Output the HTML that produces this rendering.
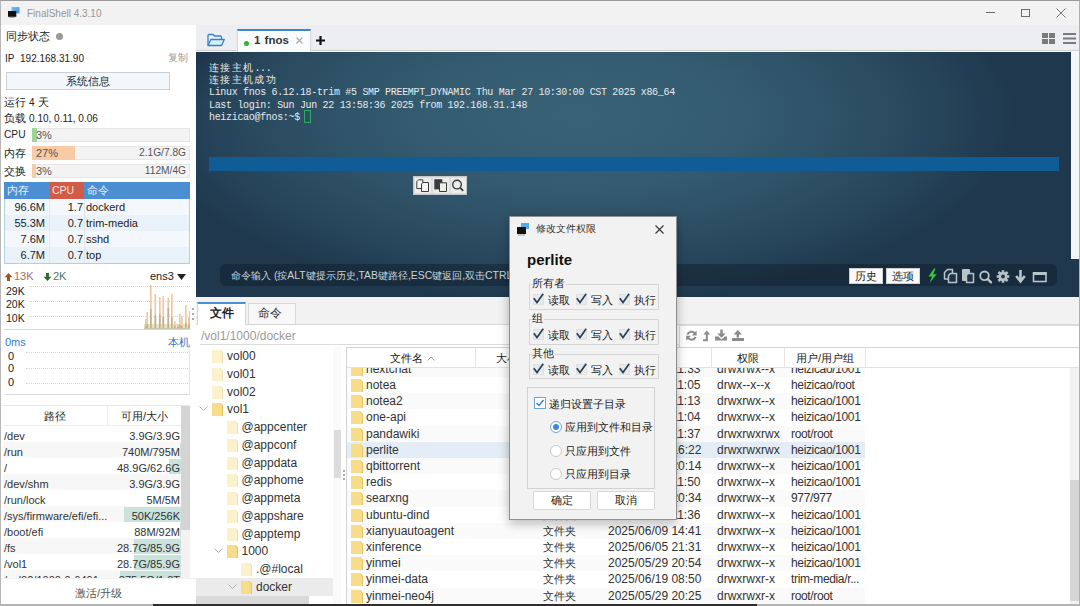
<!DOCTYPE html>
<html><head><meta charset="utf-8">
<style>
*{margin:0;padding:0;box-sizing:border-box}
html,body{width:1080px;height:606px;overflow:hidden;background:#f2f2f2;font-family:"Liberation Sans",sans-serif;color:#222}
.a{position:absolute;white-space:nowrap}
.t{font-size:11px;line-height:14px;height:14px}
</style></head><body>
<div class="a" style="left:0;top:0;width:1080px;height:606px;background:#f2f2f2;border-top:1px solid #9a9a9a;border-left:1px solid #b8b8b8;border-right:1px solid #b0b0b0"></div>

<!-- TITLE BAR -->
<svg class="a" style="left:7px;top:6px" width="15" height="15" viewBox="0 0 15 15">
 <defs><linearGradient id="gb" x1="0" y1="0" x2="1" y2="1"><stop offset="0" stop-color="#7cc0f0"/><stop offset="1" stop-color="#3f8fd8"/></linearGradient></defs>
 <rect x="4.5" y="1" width="8" height="6.3" fill="url(#gb)"/>
 <rect x="1" y="5" width="8.3" height="5.8" fill="#111"/>
 <rect x="2.5" y="11" width="5" height="1" fill="#aaa"/>
</svg>
<div class="a" style="left:27px;top:7px;font-size:10px;line-height:14px;color:#959595">FinalShell 4.3.10</div>
<div class="a" style="left:986px;top:12px;width:9px;height:1px;background:#6a6a6a"></div>
<div class="a" style="left:1021px;top:8.5px;width:9px;height:8.5px;border:1px solid #6e6e6e"></div>
<svg class="a" style="left:1056px;top:8px" width="10" height="10" viewBox="0 0 10 10"><path d="M0.5 0.5L9.5 9.5M9.5 0.5L0.5 9.5" stroke="#777" stroke-width="1"/></svg>

<!-- SIDEBAR -->
<div class="a" style="left:1px;top:25px;width:195px;height:581px;background:#fff"></div>
<div class="a t" style="left:6px;top:29px">同步状态</div>
<div class="a" style="left:56px;top:33px;width:7px;height:7px;border-radius:50%;background:#9a9a9a"></div>
<div class="a t" style="left:5px;top:52px;font-size:10px">IP&nbsp; 192.168.31.90</div>
<div class="a t" style="left:168px;top:51px;color:#9a9a9a;font-size:10px">复制</div>
<div class="a t" style="left:6px;top:72px;width:164px;height:18px;line-height:16px;text-align:center;background:#f1f7fa;border:1px solid #c9d1d6">系统信息</div>
<div class="a t" style="left:4px;top:95px">运行 <span style="font-size:10px">4</span> 天</div>
<div class="a t" style="left:4px;top:111px">负载 <span style="font-size:10px">0.10, 0.11, 0.06</span></div>

<div class="a t" style="left:4px;top:128px;font-size:10.2px">CPU</div>
<div class="a" style="left:32px;top:128px;width:158px;height:14px;background:#f3f3f3;border:1px solid #e6e6e6"></div>
<div class="a" style="left:32px;top:128px;width:5px;height:14px;background:#9fd49b"></div>
<div class="a t" style="left:36px;top:128px;color:#555">3%</div>

<div class="a t" style="left:4px;top:146px">内存</div>
<div class="a" style="left:32px;top:146px;width:158px;height:14px;background:#f3f3f3;border:1px solid #e6e6e6"></div>
<div class="a" style="left:32px;top:146px;width:43px;height:14px;background:#f6cba6"></div>
<div class="a t" style="left:36px;top:146px;color:#555">27%</div>
<div class="a t" style="left:120px;top:146px;width:66px;text-align:right;color:#555;font-size:10.2px">2.1G/7.8G</div>

<div class="a t" style="left:4px;top:164px">交换</div>
<div class="a" style="left:32px;top:164px;width:158px;height:14px;background:#f3f3f3;border:1px solid #e6e6e6"></div>
<div class="a" style="left:32px;top:164px;width:4px;height:14px;background:#f6cba6"></div>
<div class="a t" style="left:36px;top:164px;color:#555">3%</div>
<div class="a t" style="left:120px;top:164px;width:66px;text-align:right;color:#555;font-size:10.2px">112M/4G</div>

<!-- process table -->
<div class="a" style="left:4px;top:182px;width:186px;height:82px;background:#eaf2f9;border:1px solid #b9cde0"></div>
<div class="a" style="left:4px;top:182px;width:186px;height:17px;background:#4b8fd2"></div>
<div class="a" style="left:50px;top:182px;width:34px;height:17px;background:#d05b47"></div>
<div class="a t" style="left:7px;top:183px;color:#e4eefa">内存</div>
<div class="a t" style="left:52px;top:183px;color:#fde0d8;font-size:10.5px">CPU</div>
<div class="a t" style="left:87px;top:183px;color:#e4eefa">命令</div>
<div class="a" style="left:5px;top:199px;width:184px;height:16px;background:#f4f8fc"></div>
<div class="a" style="left:5px;top:231px;width:184px;height:16px;background:#f4f8fc"></div>
<div class="a" style="left:49px;top:199px;width:1px;height:64px;background:#ece6e2"></div>
<div class="a" style="left:84px;top:199px;width:1px;height:64px;background:#dde6ee"></div>
<div class="a t" style="left:5px;top:200px;width:40px;text-align:right">96.6M</div>
<div class="a t" style="left:50px;top:200px;width:33px;text-align:right">1.7</div>
<div class="a t" style="left:86px;top:200px">dockerd</div>
<div class="a t" style="left:5px;top:216px;width:40px;text-align:right">55.3M</div>
<div class="a t" style="left:50px;top:216px;width:33px;text-align:right">0.7</div>
<div class="a t" style="left:86px;top:216px">trim-media</div>
<div class="a t" style="left:5px;top:232px;width:40px;text-align:right">7.6M</div>
<div class="a t" style="left:50px;top:232px;width:33px;text-align:right">0.7</div>
<div class="a t" style="left:86px;top:232px">sshd</div>
<div class="a t" style="left:5px;top:248px;width:40px;text-align:right">6.7M</div>
<div class="a t" style="left:50px;top:248px;width:33px;text-align:right">0.7</div>
<div class="a t" style="left:86px;top:248px">top</div>

<!-- network -->
<svg class="a" style="left:4px;top:273px" width="9" height="8" viewBox="0 0 9 8"><path d="M4.5 0L0.5 4.2H3V8H6V4.2H8.5Z" fill="#a4541c"/></svg>
<div class="a t" style="left:14px;top:269px;color:#a8705c">13K</div>
<svg class="a" style="left:43px;top:273px" width="9" height="8" viewBox="0 0 9 8"><path d="M4.5 8L0.5 3.8H3V0H6V3.8H8.5Z" fill="#2f6a2a"/></svg>
<div class="a t" style="left:53px;top:269px;color:#4c7670">2K</div>
<div class="a t" style="left:150px;top:269px">ens3</div>
<svg class="a" style="left:177px;top:274px" width="9" height="6" viewBox="0 0 9 6"><path d="M0 0H9L4.5 6Z" fill="#222"/></svg>
<div class="a" style="left:4px;top:329px;width:186px;height:1px;background:#d8d8d8"></div>
<div class="a" style="left:30px;top:286px;width:160px;border-top:1px dotted #d6d6d6"></div>
<div class="a" style="left:30px;top:301px;width:160px;border-top:1px dotted #d6d6d6"></div>
<div class="a" style="left:30px;top:316px;width:160px;border-top:1px dotted #d6d6d6"></div>
<div class="a t" style="left:6px;top:284px;font-size:10.5px">29K</div>
<div class="a t" style="left:6px;top:297px;font-size:10.5px">20K</div>
<div class="a t" style="left:6px;top:311px;font-size:10.5px">10K</div>
<svg class="a" style="left:144px;top:285px" width="46" height="45" viewBox="0 0 46 45">
<rect x="0" y="39" width="46" height="5" fill="#e9e2c8"/>
<rect x="1" y="34" width="1.6" height="10" fill="#f4c4a0"/>
<rect x="1" y="41" width="1.6" height="3" fill="#b9b48e"/>
<rect x="2.5" y="27" width="1.6" height="17" fill="#f4c4a0"/>
<rect x="2.5" y="39" width="1.6" height="5" fill="#b9b48e"/>
<rect x="6" y="0" width="1.6" height="44" fill="#f4c4a0"/>
<rect x="6" y="24" width="1.6" height="20" fill="#b9b48e"/>
<rect x="10.5" y="9" width="1.6" height="35" fill="#f4c4a0"/>
<rect x="10.5" y="30" width="1.6" height="14" fill="#b9b48e"/>
<rect x="15" y="12" width="1.6" height="32" fill="#f4c4a0"/>
<rect x="15" y="29" width="1.6" height="15" fill="#b9b48e"/>
<rect x="18.5" y="11" width="1.6" height="33" fill="#f4c4a0"/>
<rect x="18.5" y="32" width="1.6" height="12" fill="#b9b48e"/>
<rect x="23.5" y="13" width="1.6" height="31" fill="#f4c4a0"/>
<rect x="23.5" y="23" width="1.6" height="21" fill="#b9b48e"/>
<rect x="27" y="9" width="1.6" height="35" fill="#f4c4a0"/>
<rect x="27" y="32" width="1.6" height="12" fill="#b9b48e"/>
<rect x="30" y="36" width="1.6" height="8" fill="#f4c4a0"/>
<rect x="30" y="41" width="1.6" height="3" fill="#b9b48e"/>
<rect x="33" y="39" width="1.6" height="5" fill="#f4c4a0"/>
<rect x="33" y="42" width="1.6" height="2" fill="#b9b48e"/>
<rect x="35" y="29" width="1.6" height="15" fill="#f4c4a0"/>
<rect x="35" y="40" width="1.6" height="4" fill="#b9b48e"/>
<rect x="37" y="32" width="1.6" height="12" fill="#f4c4a0"/>
<rect x="37" y="41" width="1.6" height="3" fill="#b9b48e"/>
<rect x="41" y="20" width="1.6" height="24" fill="#f4c4a0"/>
<rect x="41" y="38" width="1.6" height="6" fill="#b9b48e"/>
<rect x="45" y="26" width="1.6" height="18" fill="#f4c4a0"/>
<rect x="45" y="39" width="1.6" height="5" fill="#b9b48e"/>
<rect x="44" y="32" width="1.6" height="12" fill="#f4c4a0"/>
<rect x="44" y="40" width="1.6" height="4" fill="#b9b48e"/>
<rect x="0" y="43" width="46" height="1" fill="#c9c6a6"/>
</svg>

<!-- latency -->
<div class="a t" style="left:5px;top:335px;color:#3a78c0">0ms</div>
<div class="a t" style="left:168px;top:335px;color:#3a78c0">本机</div>
<div class="a" style="left:5px;top:348px;width:185px;height:47px;border-right:1px solid #e6e6e6;border-bottom:1px solid #d8d8d8"></div>
<div class="a" style="left:26px;top:352px;width:162px;border-top:1px dotted #d6d6d6"></div>
<div class="a" style="left:26px;top:368px;width:162px;border-top:1px dotted #d6d6d6"></div>
<div class="a" style="left:26px;top:383px;width:162px;border-top:1px dotted #d6d6d6"></div>
<div class="a t" style="left:8px;top:349px">0</div>
<div class="a t" style="left:8px;top:361px">0</div>
<div class="a t" style="left:8px;top:375px">0</div>

<!-- disk table -->
<div class="a" style="left:2px;top:405px;width:188px;height:173px;background:#fff;border-top:1px solid #e8e8e8"></div>
<div class="a" style="left:3px;top:406px;width:178px;height:20px;background:#fff;border-bottom:1px solid #ececec"></div>
<div class="a" style="left:107px;top:406px;width:1px;height:20px;background:#ececec"></div>
<div class="a t" style="left:3px;top:409px;width:104px;text-align:center">路径</div>
<div class="a t" style="left:108px;top:409px;width:73px;text-align:center">可用/大小</div>
<div class="a" style="left:181px;top:406px;width:9px;height:172px;background:#f2f2f2"></div>
<div class="a" style="left:181px;top:406px;width:9px;height:124px;background:#d4d4d4"></div>
<div class="a" style="left:3px;top:426px;width:178px;height:16px;background:#fff;overflow:hidden">
<div class="a t" style="left:1px;top:2.5px;color:#333">/dev</div><div class="a t" style="left:80px;top:2.5px;width:97px;text-align:right;color:#333">3.9G/3.9G</div></div>
<div class="a" style="left:3px;top:442px;width:178px;height:16px;background:#f7f7f7;overflow:hidden">
<div class="a" style="left:177px;top:1px;width:1px;height:15px;background:#c9e2dc"></div>
<div class="a t" style="left:1px;top:2.5px;color:#333">/run</div><div class="a t" style="left:80px;top:2.5px;width:97px;text-align:right;color:#333">740M/795M</div></div>
<div class="a" style="left:3px;top:458px;width:178px;height:16px;background:#fff;overflow:hidden">
<div class="a" style="left:166px;top:1px;width:12px;height:15px;background:#c9e2dc"></div>
<div class="a t" style="left:1px;top:2.5px;color:#333">/</div><div class="a t" style="left:80px;top:2.5px;width:97px;text-align:right;color:#333">48.9G/62.6G</div></div>
<div class="a" style="left:3px;top:474px;width:178px;height:16px;background:#f7f7f7;overflow:hidden">
<div class="a t" style="left:1px;top:2.5px;color:#333">/dev/shm</div><div class="a t" style="left:80px;top:2.5px;width:97px;text-align:right;color:#333">3.9G/3.9G</div></div>
<div class="a" style="left:3px;top:490px;width:178px;height:16px;background:#fff;overflow:hidden">
<div class="a t" style="left:1px;top:2.5px;color:#333">/run/lock</div><div class="a t" style="left:80px;top:2.5px;width:97px;text-align:right;color:#333">5M/5M</div></div>
<div class="a" style="left:3px;top:506px;width:178px;height:16px;background:#f7f7f7;overflow:hidden">
<div class="a" style="left:121px;top:1px;width:57px;height:15px;background:#c9e2dc"></div>
<div class="a t" style="left:1px;top:2.5px;color:#333">/sys/firmware/efi/efi...</div><div class="a t" style="left:80px;top:2.5px;width:97px;text-align:right;color:#333">50K/256K</div></div>
<div class="a" style="left:3px;top:522px;width:178px;height:16px;background:#fff;overflow:hidden">
<div class="a" style="left:177px;top:1px;width:1px;height:15px;background:#c9e2dc"></div>
<div class="a t" style="left:1px;top:2.5px;color:#333">/boot/efi</div><div class="a t" style="left:80px;top:2.5px;width:97px;text-align:right;color:#333">88M/92M</div></div>
<div class="a" style="left:3px;top:538px;width:178px;height:16px;background:#f7f7f7;overflow:hidden">
<div class="a" style="left:131px;top:1px;width:47px;height:15px;background:#c9e2dc"></div>
<div class="a t" style="left:1px;top:2.5px;color:#333">/fs</div><div class="a t" style="left:80px;top:2.5px;width:97px;text-align:right;color:#333">28.7G/85.9G</div></div>
<div class="a" style="left:3px;top:554px;width:178px;height:16px;background:#fff;overflow:hidden">
<div class="a" style="left:131px;top:1px;width:47px;height:15px;background:#c9e2dc"></div>
<div class="a t" style="left:1px;top:2.5px;color:#333">/vol1</div><div class="a t" style="left:80px;top:2.5px;width:97px;text-align:right;color:#333">28.7G/85.9G</div></div>
<div class="a" style="left:3px;top:570px;width:178px;height:8px;background:#f7f7f7;overflow:hidden">
<div class="a" style="left:117px;top:1px;width:61px;height:15px;background:#c9e2dc"></div>
<div class="a t" style="left:1px;top:2.5px;color:#333">/vol02/1000-0-6491</div><div class="a t" style="left:80px;top:2.5px;width:97px;text-align:right;color:#333">375.5G/1.8T</div></div>
<div class="a" style="left:1px;top:578px;width:195px;height:28px;background:#fff;border-top:1px solid #f0f0f0"></div>
<div class="a t" style="left:1px;top:586px;width:195px;text-align:center;color:#555">激活/升级</div>
<!-- ===== TAB BAR ===== -->
<div class="a" style="left:196px;top:25px;width:883px;height:27px;background:#edeef1"></div>
<div class="a" style="left:196px;top:50px;width:883px;height:1px;background:#cfcfcf"></div>
<div class="a" style="left:196px;top:51px;width:883px;height:2px;background:#fafafa"></div>
<svg class="a" style="left:206px;top:33px" width="20" height="14" viewBox="0 0 20 14">
 <path d="M2 12.5V2.5Q2 1.5 3 1.5H7L8.5 3H14.5Q15.5 3 15.5 4V6.5" fill="#e6f4fc" stroke="#3b7fc4" stroke-width="1.3"/>
 <path d="M2 12.5L4.8 6.5H18.3L15.6 12.5Z" fill="#d6effc" stroke="#3b7fc4" stroke-width="1.3" stroke-linejoin="round"/>
</svg>
<div class="a" style="left:237px;top:29px;width:74px;height:23px;background:#fbfcfd;border:1px solid #d6d6d6;border-bottom:none;border-top:2px solid #4085c2"></div>
<div class="a" style="left:244px;top:41px;width:5px;height:5px;border-radius:50%;background:#2fb52f"></div>
<div class="a" style="left:254px;top:33px;font-size:11.5px;line-height:15px;font-weight:bold;color:#333;word-spacing:1px">1 fnos</div>
<svg class="a" style="left:296px;top:37px" width="7" height="7" viewBox="0 0 7 7"><path d="M0.5 0.5L6.5 6.5M6.5 0.5L0.5 6.5" stroke="#a8a8a8" stroke-width="1.1"/></svg>
<svg class="a" style="left:316px;top:36px" width="9" height="9" viewBox="0 0 9 9"><path d="M4.5 0V9M0 4.5H9" stroke="#111" stroke-width="2.2"/></svg>
<svg class="a" style="left:1042px;top:33px" width="14" height="11" viewBox="0 0 14 11"><rect x="0" y="0" width="6" height="5" fill="#7a7a7a"/><rect x="7" y="0" width="6" height="5" fill="#7a7a7a"/><rect x="0" y="6" width="6" height="5" fill="#7a7a7a"/><rect x="7" y="6" width="6" height="5" fill="#7a7a7a"/></svg>
<svg class="a" style="left:1063px;top:33px" width="13" height="11" viewBox="0 0 13 11"><rect x="0" y="0" width="13" height="2" fill="#7a7a7a"/><rect x="0" y="4.5" width="13" height="2" fill="#7a7a7a"/><rect x="0" y="9" width="13" height="2" fill="#7a7a7a"/></svg>

<!-- ===== TERMINAL ===== -->
<div class="a" style="left:196px;top:52px;width:883px;height:245px;background:radial-gradient(ellipse 70px 50px at 0px 0px,rgba(20,35,55,0.3),rgba(20,35,55,0) 100%),radial-gradient(ellipse 437px 187px at 383px 64px,#386175 0%,#375f73 20%,#335a6e 40%,#2e5166 60%,#28465b 80%,#1f384e 100%)"></div>
<div class="a" style="left:1071px;top:52px;width:8px;height:207px;background:#f4f6f8"></div>
<div class="a" style="left:209px;top:63px;font-family:'Liberation Mono',monospace;font-size:10px;line-height:12.2px;letter-spacing:-0.32px;color:#e6e9ec;white-space:pre"><span style="display:inline-block;width:11.36px;letter-spacing:0">连</span><span style="display:inline-block;width:11.36px;letter-spacing:0">接</span><span style="display:inline-block;width:11.36px;letter-spacing:0">主</span><span style="display:inline-block;width:11.36px;letter-spacing:0">机</span>...
<span style="display:inline-block;width:11.36px;letter-spacing:0">连</span><span style="display:inline-block;width:11.36px;letter-spacing:0">接</span><span style="display:inline-block;width:11.36px;letter-spacing:0">主</span><span style="display:inline-block;width:11.36px;letter-spacing:0">机</span><span style="display:inline-block;width:11.36px;letter-spacing:0">成</span><span style="display:inline-block;width:11.36px;letter-spacing:0">功</span>
Linux fnos 6.12.18-trim #5 SMP PREEMPT_DYNAMIC Thu Mar 27 10:30:00 CST 2025 x86_64
Last login: Sun Jun 22 13:58:36 2025 from 192.168.31.148
heizicao@fnos:~$ </div>
<div class="a" style="left:304px;top:110px;width:7px;height:13px;border:1px solid #2fa86a"></div>
<div class="a" style="left:209px;top:157px;width:850px;height:14px;background:#0f5c96"></div>
<!-- popup toolbar -->
<div class="a" style="left:413px;top:176px;width:54px;height:19px;background:#d9dedf;border:1px solid #c4cacc"></div>
<div class="a" style="left:415px;top:178px;width:16px;height:15px;background:#ececec"></div>
<div class="a" style="left:433px;top:178px;width:16px;height:15px;background:#ececec"></div>
<div class="a" style="left:451px;top:178px;width:15px;height:15px;background:#ececec"></div>
<svg class="a" style="left:413px;top:176px" width="54" height="19" viewBox="0 0 54 19">
 <path d="M5.5 3.8H9.8V12.5H3.8V5.5Z" fill="#f4f4f4" stroke="#3a3a3a" stroke-width="1"/>
 <path d="M10 6.5H15.5V15.5H8.5V8Z" fill="#f4f4f4" stroke="#3a3a3a" stroke-width="1"/>
 <rect x="21.3" y="3.2" width="8" height="10.2" fill="#3a3a3a"/>
 <path d="M27.5 6.8H33.5V15.5H26.5V7.8Z" fill="#eef0ea" stroke="#3a3a3a" stroke-width="1"/>
 <circle cx="44" cy="8.6" r="4.3" fill="none" stroke="#3a3a3a" stroke-width="1.4"/>
 <path d="M47 11.6L50.2 14.8" stroke="#3a3a3a" stroke-width="1.8"/>
</svg>

<!-- command bar -->
<div class="a" style="left:220px;top:264px;width:837px;height:22px;border-radius:6px;background:rgba(15,28,40,0.45)"></div>
<div class="a" style="left:231px;top:269px;font-size:10.4px;line-height:14px;color:#c9d2da">命令输入 (按ALT键提示历史,TAB键路径,ESC键返回,双击CTRL切换)</div>
<div class="a" style="left:849px;top:268px;width:34px;height:16px;background:#fafafa;border:1px solid #cfcfcf;font-size:11px;line-height:14px;text-align:center;color:#222">历史</div>
<div class="a" style="left:886px;top:268px;width:34px;height:16px;background:#fafafa;border:1px solid #cfcfcf;font-size:11px;line-height:14px;text-align:center;color:#222">选项</div>
<svg class="a" style="left:925px;top:266px" width="125" height="20" viewBox="0 0 125 20">
 <path d="M9 2.5L3.5 10.5H7L4.5 17L11.8 8.2H8.2L10.5 2.5Z" fill="#39c43a"/>
 <path d="M22.5 3.5H27.5V13H19.5V6.5Z" fill="#1d3346" stroke="#b9c3ca" stroke-width="1.5" stroke-linejoin="round"/>
 <path d="M25.5 7.5H31.5V16.5H23.5V9.5Z" fill="#1d3346" stroke="#b9c3ca" stroke-width="1.5" stroke-linejoin="round"/>
 <rect x="37" y="3" width="8" height="12" rx="1" fill="#b9c3ca"/>
 <path d="M43 7.5H48.5V16.5H41.5V9Z" fill="#1d3346" stroke="#b9c3ca" stroke-width="1.5" stroke-linejoin="round"/>
 <circle cx="59.5" cy="9.8" r="4.3" fill="none" stroke="#b9c3ca" stroke-width="1.8"/>
 <path d="M62.8 13.1L66 16.3" stroke="#b9c3ca" stroke-width="2.4" stroke-linecap="round"/>
 <g transform="translate(78,10.5)"><circle r="4.6" fill="#b9c3ca"/><path d="M0 -6.3V6.3M-6.3 0H6.3M-4.5 -4.5L4.5 4.5M4.5 -4.5L-4.5 4.5" stroke="#b9c3ca" stroke-width="2.6"/><circle r="1.9" fill="#1d3346"/></g>
 <path d="M95.5 4V14.5M91.2 10L95.5 15.5L99.8 10" fill="none" stroke="#b9c3ca" stroke-width="2.6" stroke-linejoin="miter"/>
 <rect x="108.5" y="6.8" width="12.5" height="8.7" fill="none" stroke="#b9c3ca" stroke-width="1.6"/>
 <rect x="108" y="6" width="13.5" height="3" fill="#b9c3ca"/>
</svg>

<!-- ===== FILE PANEL ===== -->
<div class="a" style="left:196px;top:297px;width:883px;height:28px;background:#f2f2f2;border-bottom:1px solid #d8d8d8"></div>
<div class="a" style="left:197px;top:302px;width:49px;height:23px;background:#fff;border:1px solid #d6d6d6;border-bottom:none;border-top:2px solid #4a90d9"></div>
<div class="a" style="left:210px;top:306px;font-size:12px;line-height:15px;font-weight:bold;color:#222">文件</div>
<div class="a" style="left:248px;top:303px;width:48px;height:21px;background:#f7f7f7;border:1px solid #d8d8d8;border-bottom:none"></div>
<div class="a" style="left:258px;top:306px;font-size:12px;line-height:15px;color:#333">命令</div>
<div class="a" style="left:192px;top:308px;width:2px;height:2px;background:#aaa"></div>
<div class="a" style="left:192px;top:313px;width:2px;height:2px;background:#aaa"></div>
<div class="a" style="left:192px;top:318px;width:2px;height:2px;background:#aaa"></div>
<div class="a" style="left:196px;top:325px;width:883px;height:281px;background:#fff"></div>
<div class="a" style="left:201px;top:329px;font-size:12px;line-height:15px;color:#9a9a9a">/vol1/1000/docker</div>
<div class="a" style="left:200px;top:344px;width:479px;height:1px;background:#dcdcdc"></div>
<div class="a" style="left:679px;top:325px;width:400px;height:1px;background:#dcdcdc"></div>
<div class="a" style="left:679px;top:325px;width:1px;height:22px;background:#e0e0e0"></div>
<svg class="a" style="left:685px;top:329px" width="62" height="14" viewBox="0 0 62 14">
 <path d="M2.4 5.6A4.4 4.4 0 0 1 9.8 4.2" fill="none" stroke="#8a8a8a" stroke-width="2"/>
 <path d="M11.6 1.6V6.6H6.8Z" fill="#8a8a8a"/>
 <path d="M10.6 7.8A4.4 4.4 0 0 1 3.2 9.2" fill="none" stroke="#8a8a8a" stroke-width="2"/>
 <path d="M1.2 11.8V6.8H6Z" fill="#8a8a8a"/>
 <path d="M21.8 1.5L25.2 5.6H18.4Z" fill="#8a8a8a"/>
 <path d="M21.8 5V11.2H18" fill="none" stroke="#8a8a8a" stroke-width="2"/>
 <path d="M35.3 0.6H37.7V4.6H40.8L36.5 8.8L32.2 4.6H35.3Z" fill="#8a8a8a"/>
 <path d="M30 7.6H33.2L36.5 10.6L39.8 7.6H42V11.6H30Z" fill="#8a8a8a"/>
 <path d="M52.8 1L57 5.6H54V8.6H51.6V5.6H48.6Z" fill="#8a8a8a"/>
 <rect x="47" y="9" width="12" height="3" fill="#8a8a8a"/>
</svg>
<div class="a" style="left:196px;top:578px;width:137px;height:18px;background:#ebebeb"></div>
<div class="a" style="left:196px;top:596px;width:113px;height:8px;background:#d9d9d9"></div>
<div class="a" style="left:333px;top:347px;width:8px;height:257px;background:#fafafa"></div>
<div class="a" style="left:334px;top:430px;width:7px;height:48px;background:#dcdcdc"></div>
<div class="a" style="left:343px;top:470px;width:2px;height:2px;background:#aaa"></div>
<div class="a" style="left:343px;top:474px;width:2px;height:2px;background:#aaa"></div>
<div class="a" style="left:343px;top:478px;width:2px;height:2px;background:#aaa"></div>
<svg class="a" style="left:212.0px;top:350.0px" width="11" height="13" viewBox="0 0 11 13"><path d="M0 0H8.5L11 2.5V13H0Z" fill="#fbf1cc"/><path d="M8.5 0L11 2.5V13H10V3L8 0Z" fill="#efe2b0"/></svg>
<div class="a" style="left:227.0px;top:348.0px;font-size:12px;line-height:17px;color:#333">vol00</div>
<svg class="a" style="left:212.0px;top:367.75px" width="11" height="13" viewBox="0 0 11 13"><path d="M0 0H8.5L11 2.5V13H0Z" fill="#fbf1cc"/><path d="M8.5 0L11 2.5V13H10V3L8 0Z" fill="#efe2b0"/></svg>
<div class="a" style="left:227.0px;top:365.75px;font-size:12px;line-height:17px;color:#333">vol01</div>
<svg class="a" style="left:212.0px;top:385.5px" width="11" height="13" viewBox="0 0 11 13"><path d="M0 0H8.5L11 2.5V13H0Z" fill="#fbf1cc"/><path d="M8.5 0L11 2.5V13H10V3L8 0Z" fill="#efe2b0"/></svg>
<div class="a" style="left:227.0px;top:383.5px;font-size:12px;line-height:17px;color:#333">vol02</div>
<svg class="a" style="left:199.0px;top:406.25px" width="9" height="6" viewBox="0 0 9 6"><path d="M0.5 0.5L4.5 4.5L8.5 0.5" fill="none" stroke="#b0b0b0" stroke-width="1"/></svg>
<svg class="a" style="left:212.0px;top:403.25px" width="11" height="13" viewBox="0 0 11 13"><path d="M0 0H8.5L11 2.5V13H0Z" fill="#f7dc8a"/><path d="M8.5 0L11 2.5V13H10V3L8 0Z" fill="#e8c45a"/></svg>
<div class="a" style="left:227.0px;top:401.25px;font-size:12px;line-height:17px;color:#333">vol1</div>
<svg class="a" style="left:226.5px;top:421.0px" width="11" height="13" viewBox="0 0 11 13"><path d="M0 0H8.5L11 2.5V13H0Z" fill="#fbf1cc"/><path d="M8.5 0L11 2.5V13H10V3L8 0Z" fill="#efe2b0"/></svg>
<div class="a" style="left:241.5px;top:419.0px;font-size:12px;line-height:17px;color:#333">@appcenter</div>
<svg class="a" style="left:226.5px;top:438.75px" width="11" height="13" viewBox="0 0 11 13"><path d="M0 0H8.5L11 2.5V13H0Z" fill="#fbf1cc"/><path d="M8.5 0L11 2.5V13H10V3L8 0Z" fill="#efe2b0"/></svg>
<div class="a" style="left:241.5px;top:436.75px;font-size:12px;line-height:17px;color:#333">@appconf</div>
<svg class="a" style="left:226.5px;top:456.5px" width="11" height="13" viewBox="0 0 11 13"><path d="M0 0H8.5L11 2.5V13H0Z" fill="#fbf1cc"/><path d="M8.5 0L11 2.5V13H10V3L8 0Z" fill="#efe2b0"/></svg>
<div class="a" style="left:241.5px;top:454.5px;font-size:12px;line-height:17px;color:#333">@appdata</div>
<svg class="a" style="left:226.5px;top:474.25px" width="11" height="13" viewBox="0 0 11 13"><path d="M0 0H8.5L11 2.5V13H0Z" fill="#fbf1cc"/><path d="M8.5 0L11 2.5V13H10V3L8 0Z" fill="#efe2b0"/></svg>
<div class="a" style="left:241.5px;top:472.25px;font-size:12px;line-height:17px;color:#333">@apphome</div>
<svg class="a" style="left:226.5px;top:492.0px" width="11" height="13" viewBox="0 0 11 13"><path d="M0 0H8.5L11 2.5V13H0Z" fill="#fbf1cc"/><path d="M8.5 0L11 2.5V13H10V3L8 0Z" fill="#efe2b0"/></svg>
<div class="a" style="left:241.5px;top:490.0px;font-size:12px;line-height:17px;color:#333">@appmeta</div>
<svg class="a" style="left:226.5px;top:509.75px" width="11" height="13" viewBox="0 0 11 13"><path d="M0 0H8.5L11 2.5V13H0Z" fill="#fbf1cc"/><path d="M8.5 0L11 2.5V13H10V3L8 0Z" fill="#efe2b0"/></svg>
<div class="a" style="left:241.5px;top:507.75px;font-size:12px;line-height:17px;color:#333">@appshare</div>
<svg class="a" style="left:226.5px;top:527.5px" width="11" height="13" viewBox="0 0 11 13"><path d="M0 0H8.5L11 2.5V13H0Z" fill="#fbf1cc"/><path d="M8.5 0L11 2.5V13H10V3L8 0Z" fill="#efe2b0"/></svg>
<div class="a" style="left:241.5px;top:525.5px;font-size:12px;line-height:17px;color:#333">@apptemp</div>
<svg class="a" style="left:213.5px;top:548.25px" width="9" height="6" viewBox="0 0 9 6"><path d="M0.5 0.5L4.5 4.5L8.5 0.5" fill="none" stroke="#b0b0b0" stroke-width="1"/></svg>
<svg class="a" style="left:226.5px;top:545.25px" width="11" height="13" viewBox="0 0 11 13"><path d="M0 0H8.5L11 2.5V13H0Z" fill="#f7dc8a"/><path d="M8.5 0L11 2.5V13H10V3L8 0Z" fill="#e8c45a"/></svg>
<div class="a" style="left:241.5px;top:543.25px;font-size:12px;line-height:17px;color:#333">1000</div>
<svg class="a" style="left:241.0px;top:563.0px" width="11" height="13" viewBox="0 0 11 13"><path d="M0 0H8.5L11 2.5V13H0Z" fill="#fbf1cc"/><path d="M8.5 0L11 2.5V13H10V3L8 0Z" fill="#efe2b0"/></svg>
<div class="a" style="left:256.0px;top:561.0px;font-size:12px;line-height:17px;color:#333">.@#local</div>
<svg class="a" style="left:228.0px;top:583.75px" width="9" height="6" viewBox="0 0 9 6"><path d="M0.5 0.5L4.5 4.5L8.5 0.5" fill="none" stroke="#b0b0b0" stroke-width="1"/></svg>
<svg class="a" style="left:241.0px;top:580.75px" width="11" height="13" viewBox="0 0 11 13"><path d="M0 0H8.5L11 2.5V13H0Z" fill="#f7dc8a"/><path d="M8.5 0L11 2.5V13H10V3L8 0Z" fill="#e8c45a"/></svg>
<div class="a" style="left:256.0px;top:578.75px;font-size:12px;line-height:17px;color:#333">docker</div>
<div class="a" style="left:346px;top:347px;width:733px;height:257px;background:#fff;border-left:1px solid #d4d4d4;border-top:1px solid #d4d4d4;overflow:hidden">
<div class="a" style="left:0;top:12.8px;width:518px;height:16.2px;background:#fafafa"></div>
<svg class="a" style="left:4px;top:14.8px" width="12" height="13" viewBox="0 0 12 13"><path d="M0 0H9L12 3V13H0Z" fill="#f7dc8a"/><path d="M9 0L12 3V13H11V3.5L8.5 0Z" fill="#e8c45a"/></svg>
<div class="a" style="left:19px;top:13.8px;font-size:12px;line-height:15px;color:#333">nextchat</div>
<div class="a" style="left:196px;top:13.8px;font-size:11px;line-height:15px;color:#333">文件夹</div>
<div class="a" style="left:261px;top:13.8px;font-size:12px;line-height:15px;color:#333">2025/06/05 11:33</div>
<div class="a" style="left:370px;top:13.8px;font-size:12px;line-height:15px;color:#333">drwxrwx--x</div>
<div class="a" style="left:444px;top:13.8px;font-size:12px;line-height:15px;letter-spacing:-0.35px;color:#333">heizicao/1001</div>
<div class="a" style="left:0;top:29.0px;width:518px;height:16.2px;background:#fff"></div>
<svg class="a" style="left:4px;top:31.0px" width="12" height="13" viewBox="0 0 12 13"><path d="M0 0H9L12 3V13H0Z" fill="#f7dc8a"/><path d="M9 0L12 3V13H11V3.5L8.5 0Z" fill="#e8c45a"/></svg>
<div class="a" style="left:19px;top:30.0px;font-size:12px;line-height:15px;color:#333">notea</div>
<div class="a" style="left:196px;top:30.0px;font-size:11px;line-height:15px;color:#333">文件夹</div>
<div class="a" style="left:261px;top:30.0px;font-size:12px;line-height:15px;color:#333">2025/06/05 11:05</div>
<div class="a" style="left:370px;top:30.0px;font-size:12px;line-height:15px;color:#333">drwx--x--x</div>
<div class="a" style="left:444px;top:30.0px;font-size:12px;line-height:15px;letter-spacing:-0.35px;color:#333">heizicao/root</div>
<div class="a" style="left:0;top:45.2px;width:518px;height:16.2px;background:#fafafa"></div>
<svg class="a" style="left:4px;top:47.2px" width="12" height="13" viewBox="0 0 12 13"><path d="M0 0H9L12 3V13H0Z" fill="#f7dc8a"/><path d="M9 0L12 3V13H11V3.5L8.5 0Z" fill="#e8c45a"/></svg>
<div class="a" style="left:19px;top:46.2px;font-size:12px;line-height:15px;color:#333">notea2</div>
<div class="a" style="left:196px;top:46.2px;font-size:11px;line-height:15px;color:#333">文件夹</div>
<div class="a" style="left:261px;top:46.2px;font-size:12px;line-height:15px;color:#333">2025/06/05 11:13</div>
<div class="a" style="left:370px;top:46.2px;font-size:12px;line-height:15px;color:#333">drwxrwx--x</div>
<div class="a" style="left:444px;top:46.2px;font-size:12px;line-height:15px;letter-spacing:-0.35px;color:#333">heizicao/1001</div>
<div class="a" style="left:0;top:61.4px;width:518px;height:16.2px;background:#fff"></div>
<svg class="a" style="left:4px;top:63.4px" width="12" height="13" viewBox="0 0 12 13"><path d="M0 0H9L12 3V13H0Z" fill="#f7dc8a"/><path d="M9 0L12 3V13H11V3.5L8.5 0Z" fill="#e8c45a"/></svg>
<div class="a" style="left:19px;top:62.4px;font-size:12px;line-height:15px;color:#333">one-api</div>
<div class="a" style="left:196px;top:62.4px;font-size:11px;line-height:15px;color:#333">文件夹</div>
<div class="a" style="left:261px;top:62.4px;font-size:12px;line-height:15px;color:#333">2025/06/05 11:04</div>
<div class="a" style="left:370px;top:62.4px;font-size:12px;line-height:15px;color:#333">drwxrwx--x</div>
<div class="a" style="left:444px;top:62.4px;font-size:12px;line-height:15px;letter-spacing:-0.35px;color:#333">heizicao/1001</div>
<div class="a" style="left:0;top:77.6px;width:518px;height:16.2px;background:#fafafa"></div>
<svg class="a" style="left:4px;top:79.6px" width="12" height="13" viewBox="0 0 12 13"><path d="M0 0H9L12 3V13H0Z" fill="#f7dc8a"/><path d="M9 0L12 3V13H11V3.5L8.5 0Z" fill="#e8c45a"/></svg>
<div class="a" style="left:19px;top:78.6px;font-size:12px;line-height:15px;color:#333">pandawiki</div>
<div class="a" style="left:196px;top:78.6px;font-size:11px;line-height:15px;color:#333">文件夹</div>
<div class="a" style="left:261px;top:78.6px;font-size:12px;line-height:15px;color:#333">2025/06/05 11:37</div>
<div class="a" style="left:370px;top:78.6px;font-size:12px;line-height:15px;color:#333">drwxrwxrwx</div>
<div class="a" style="left:444px;top:78.6px;font-size:12px;line-height:15px;letter-spacing:-0.35px;color:#333">root/root</div>
<div class="a" style="left:0;top:93.8px;width:518px;height:16.2px;background:#e4edf5"></div>
<svg class="a" style="left:4px;top:95.8px" width="12" height="13" viewBox="0 0 12 13"><path d="M0 0H9L12 3V13H0Z" fill="#f7dc8a"/><path d="M9 0L12 3V13H11V3.5L8.5 0Z" fill="#e8c45a"/></svg>
<div class="a" style="left:19px;top:94.8px;font-size:12px;line-height:15px;color:#333">perlite</div>
<div class="a" style="left:196px;top:94.8px;font-size:11px;line-height:15px;color:#333">文件夹</div>
<div class="a" style="left:261px;top:94.8px;font-size:12px;line-height:15px;color:#333">2025/06/05 16:22</div>
<div class="a" style="left:370px;top:94.8px;font-size:12px;line-height:15px;color:#333">drwxrwxrwx</div>
<div class="a" style="left:444px;top:94.8px;font-size:12px;line-height:15px;letter-spacing:-0.35px;color:#333">heizicao/1001</div>
<div class="a" style="left:0;top:110.0px;width:518px;height:16.2px;background:#fafafa"></div>
<svg class="a" style="left:4px;top:112.0px" width="12" height="13" viewBox="0 0 12 13"><path d="M0 0H9L12 3V13H0Z" fill="#f7dc8a"/><path d="M9 0L12 3V13H11V3.5L8.5 0Z" fill="#e8c45a"/></svg>
<div class="a" style="left:19px;top:111.0px;font-size:12px;line-height:15px;color:#333">qbittorrent</div>
<div class="a" style="left:196px;top:111.0px;font-size:11px;line-height:15px;color:#333">文件夹</div>
<div class="a" style="left:261px;top:111.0px;font-size:12px;line-height:15px;color:#333">2025/06/05 20:14</div>
<div class="a" style="left:370px;top:111.0px;font-size:12px;line-height:15px;color:#333">drwxrwx--x</div>
<div class="a" style="left:444px;top:111.0px;font-size:12px;line-height:15px;letter-spacing:-0.35px;color:#333">heizicao/1001</div>
<div class="a" style="left:0;top:126.2px;width:518px;height:16.2px;background:#fff"></div>
<svg class="a" style="left:4px;top:128.2px" width="12" height="13" viewBox="0 0 12 13"><path d="M0 0H9L12 3V13H0Z" fill="#f7dc8a"/><path d="M9 0L12 3V13H11V3.5L8.5 0Z" fill="#e8c45a"/></svg>
<div class="a" style="left:19px;top:127.2px;font-size:12px;line-height:15px;color:#333">redis</div>
<div class="a" style="left:196px;top:127.2px;font-size:11px;line-height:15px;color:#333">文件夹</div>
<div class="a" style="left:261px;top:127.2px;font-size:12px;line-height:15px;color:#333">2025/06/05 11:50</div>
<div class="a" style="left:370px;top:127.2px;font-size:12px;line-height:15px;color:#333">drwxrwx--x</div>
<div class="a" style="left:444px;top:127.2px;font-size:12px;line-height:15px;letter-spacing:-0.35px;color:#333">heizicao/1001</div>
<div class="a" style="left:0;top:142.4px;width:518px;height:16.2px;background:#fafafa"></div>
<svg class="a" style="left:4px;top:144.4px" width="12" height="13" viewBox="0 0 12 13"><path d="M0 0H9L12 3V13H0Z" fill="#f7dc8a"/><path d="M9 0L12 3V13H11V3.5L8.5 0Z" fill="#e8c45a"/></svg>
<div class="a" style="left:19px;top:143.4px;font-size:12px;line-height:15px;color:#333">searxng</div>
<div class="a" style="left:196px;top:143.4px;font-size:11px;line-height:15px;color:#333">文件夹</div>
<div class="a" style="left:261px;top:143.4px;font-size:12px;line-height:15px;color:#333">2025/06/05 20:34</div>
<div class="a" style="left:370px;top:143.4px;font-size:12px;line-height:15px;color:#333">drwxrwx--x</div>
<div class="a" style="left:444px;top:143.4px;font-size:12px;line-height:15px;letter-spacing:-0.35px;color:#333">977/977</div>
<div class="a" style="left:0;top:158.6px;width:518px;height:16.2px;background:#fff"></div>
<svg class="a" style="left:4px;top:160.6px" width="12" height="13" viewBox="0 0 12 13"><path d="M0 0H9L12 3V13H0Z" fill="#f7dc8a"/><path d="M9 0L12 3V13H11V3.5L8.5 0Z" fill="#e8c45a"/></svg>
<div class="a" style="left:19px;top:159.6px;font-size:12px;line-height:15px;color:#333">ubuntu-dind</div>
<div class="a" style="left:196px;top:159.6px;font-size:11px;line-height:15px;color:#333">文件夹</div>
<div class="a" style="left:261px;top:159.6px;font-size:12px;line-height:15px;color:#333">2025/06/05 11:36</div>
<div class="a" style="left:370px;top:159.6px;font-size:12px;line-height:15px;color:#333">drwxrwx--x</div>
<div class="a" style="left:444px;top:159.6px;font-size:12px;line-height:15px;letter-spacing:-0.35px;color:#333">heizicao/1001</div>
<div class="a" style="left:0;top:174.8px;width:518px;height:16.2px;background:#fafafa"></div>
<svg class="a" style="left:4px;top:176.8px" width="12" height="13" viewBox="0 0 12 13"><path d="M0 0H9L12 3V13H0Z" fill="#f7dc8a"/><path d="M9 0L12 3V13H11V3.5L8.5 0Z" fill="#e8c45a"/></svg>
<div class="a" style="left:19px;top:175.8px;font-size:12px;line-height:15px;color:#333">xianyuautoagent</div>
<div class="a" style="left:196px;top:175.8px;font-size:11px;line-height:15px;color:#333">文件夹</div>
<div class="a" style="left:261px;top:175.8px;font-size:12px;line-height:15px;color:#333">2025/06/09 14:41</div>
<div class="a" style="left:370px;top:175.8px;font-size:12px;line-height:15px;color:#333">drwxrwx--x</div>
<div class="a" style="left:444px;top:175.8px;font-size:12px;line-height:15px;letter-spacing:-0.35px;color:#333">heizicao/1001</div>
<div class="a" style="left:0;top:191.0px;width:518px;height:16.2px;background:#fff"></div>
<svg class="a" style="left:4px;top:193.0px" width="12" height="13" viewBox="0 0 12 13"><path d="M0 0H9L12 3V13H0Z" fill="#f7dc8a"/><path d="M9 0L12 3V13H11V3.5L8.5 0Z" fill="#e8c45a"/></svg>
<div class="a" style="left:19px;top:192.0px;font-size:12px;line-height:15px;color:#333">xinference</div>
<div class="a" style="left:196px;top:192.0px;font-size:11px;line-height:15px;color:#333">文件夹</div>
<div class="a" style="left:261px;top:192.0px;font-size:12px;line-height:15px;color:#333">2025/06/05 21:31</div>
<div class="a" style="left:370px;top:192.0px;font-size:12px;line-height:15px;color:#333">drwxrwx--x</div>
<div class="a" style="left:444px;top:192.0px;font-size:12px;line-height:15px;letter-spacing:-0.35px;color:#333">heizicao/1001</div>
<div class="a" style="left:0;top:207.2px;width:518px;height:16.2px;background:#fafafa"></div>
<svg class="a" style="left:4px;top:209.2px" width="12" height="13" viewBox="0 0 12 13"><path d="M0 0H9L12 3V13H0Z" fill="#f7dc8a"/><path d="M9 0L12 3V13H11V3.5L8.5 0Z" fill="#e8c45a"/></svg>
<div class="a" style="left:19px;top:208.2px;font-size:12px;line-height:15px;color:#333">yinmei</div>
<div class="a" style="left:196px;top:208.2px;font-size:11px;line-height:15px;color:#333">文件夹</div>
<div class="a" style="left:261px;top:208.2px;font-size:12px;line-height:15px;color:#333">2025/05/29 20:54</div>
<div class="a" style="left:370px;top:208.2px;font-size:12px;line-height:15px;color:#333">drwxrwx--x</div>
<div class="a" style="left:444px;top:208.2px;font-size:12px;line-height:15px;letter-spacing:-0.35px;color:#333">heizicao/1001</div>
<div class="a" style="left:0;top:223.4px;width:518px;height:16.2px;background:#fff"></div>
<svg class="a" style="left:4px;top:225.4px" width="12" height="13" viewBox="0 0 12 13"><path d="M0 0H9L12 3V13H0Z" fill="#f7dc8a"/><path d="M9 0L12 3V13H11V3.5L8.5 0Z" fill="#e8c45a"/></svg>
<div class="a" style="left:19px;top:224.4px;font-size:12px;line-height:15px;color:#333">yinmei-data</div>
<div class="a" style="left:196px;top:224.4px;font-size:11px;line-height:15px;color:#333">文件夹</div>
<div class="a" style="left:261px;top:224.4px;font-size:12px;line-height:15px;color:#333">2025/06/19 08:50</div>
<div class="a" style="left:370px;top:224.4px;font-size:12px;line-height:15px;color:#333">drwxrwxr-x</div>
<div class="a" style="left:444px;top:224.4px;font-size:12px;line-height:15px;letter-spacing:-0.35px;color:#333">trim-media/r...</div>
<div class="a" style="left:0;top:239.6px;width:518px;height:16.2px;background:#fafafa"></div>
<svg class="a" style="left:4px;top:241.6px" width="12" height="13" viewBox="0 0 12 13"><path d="M0 0H9L12 3V13H0Z" fill="#f7dc8a"/><path d="M9 0L12 3V13H11V3.5L8.5 0Z" fill="#e8c45a"/></svg>
<div class="a" style="left:19px;top:240.6px;font-size:12px;line-height:15px;color:#333">yinmei-neo4j</div>
<div class="a" style="left:196px;top:240.6px;font-size:11px;line-height:15px;color:#333">文件夹</div>
<div class="a" style="left:261px;top:240.6px;font-size:12px;line-height:15px;color:#333">2025/05/29 20:25</div>
<div class="a" style="left:370px;top:240.6px;font-size:12px;line-height:15px;color:#333">drwxrwxr-x</div>
<div class="a" style="left:444px;top:240.6px;font-size:12px;line-height:15px;letter-spacing:-0.35px;color:#333">root/root</div>
<div class="a" style="left:0;top:0;width:733px;height:20px;background:#fff;border-bottom:1px solid #e2e2e2"></div>
<div class="a" style="left:128px;top:0;width:1px;height:20px;background:#e4e4e4"></div>
<div class="a" style="left:364px;top:0;width:1px;height:20px;background:#e4e4e4"></div>
<div class="a" style="left:437px;top:0;width:1px;height:20px;background:#e4e4e4"></div>
<div class="a" style="left:518px;top:0;width:1px;height:20px;background:#e4e4e4"></div>
<div class="a" style="left:43px;top:2px;font-size:11px;line-height:16px;color:#222">文件名</div>
<svg class="a" style="left:80px;top:8px" width="8" height="5" viewBox="0 0 8 5"><path d="M0.5 4.5L4 1L7.5 4.5" fill="none" stroke="#aaa" stroke-width="1"/></svg>
<div class="a" style="left:149px;top:2px;font-size:11px;line-height:16px;color:#222">大小</div>
<div class="a" style="left:200px;top:2px;font-size:11px;line-height:16px;color:#222">类型</div>
<div class="a" style="left:280px;top:2px;font-size:11px;line-height:16px;color:#222">修改时间</div>
<div class="a" style="left:390px;top:2px;font-size:11px;line-height:16px;color:#222">权限</div>
<div class="a" style="left:449px;top:2px;font-size:11px;line-height:16px;color:#222">用户/用户组</div>
<div class="a" style="left:723px;top:20px;width:9px;height:237px;background:#f2f2f2"></div>
<div class="a" style="left:723px;top:132px;width:9px;height:121px;background:#d6d6d6"></div>
</div>
<!-- ===== DIALOG ===== -->
<div class="a" style="left:509px;top:216px;width:168px;height:304px;background:#f2f2f2;border:1px solid #8f8f8f;box-shadow:0 3px 10px rgba(0,0,0,0.3)"></div>
<svg class="a" style="left:516px;top:222px" width="14" height="14" viewBox="0 0 14 14">
 <rect x="5" y="1" width="8" height="6" fill="#5aa8e8"/>
 <rect x="1" y="5" width="9" height="7" fill="#111"/>
 <rect x="2" y="12.5" width="7" height="1" fill="#999"/>
</svg>
<div class="a" style="left:536px;top:222px;font-size:10px;line-height:14px;color:#333">修改文件权限</div>
<svg class="a" style="left:655px;top:225px" width="9" height="9" viewBox="0 0 9 9"><path d="M0.5 0.5L8.5 8.5M8.5 0.5L0.5 8.5" stroke="#333" stroke-width="1.1"/></svg>
<div class="a" style="left:527px;top:251px;font-size:15px;line-height:18px;font-weight:bold;color:#111">perlite</div>

<div class="a" style="left:528.5px;top:284px;width:130.5px;height:26px;border:1px solid #d4d4d4"></div>
<div class="a" style="left:532px;top:277px;font-size:10.8px;line-height:13px;color:#222;background:#f2f2f2;padding-right:1px">所有者</div>
<div class="a" style="left:533px;top:294px;width:11px;height:11px;background:#e9e9e9;border:1px solid #e0e0e0"></div>
<svg class="a" style="left:533px;top:293px" width="11" height="11" viewBox="0 0 11 11"><path d="M0.8 5.2L4 9.5L10.2 0.8" fill="none" stroke="#25425c" stroke-width="1.7"/></svg>
<div class="a" style="left:548px;top:293px;font-size:10.8px;line-height:14px;color:#222">读取</div>
<div class="a" style="left:576px;top:294px;width:11px;height:11px;background:#e9e9e9;border:1px solid #e0e0e0"></div>
<svg class="a" style="left:576px;top:293px" width="11" height="11" viewBox="0 0 11 11"><path d="M0.8 5.2L4 9.5L10.2 0.8" fill="none" stroke="#25425c" stroke-width="1.7"/></svg>
<div class="a" style="left:591px;top:293px;font-size:10.8px;line-height:14px;color:#222">写入</div>
<div class="a" style="left:619px;top:294px;width:11px;height:11px;background:#e9e9e9;border:1px solid #e0e0e0"></div>
<svg class="a" style="left:619px;top:293px" width="11" height="11" viewBox="0 0 11 11"><path d="M0.8 5.2L4 9.5L10.2 0.8" fill="none" stroke="#25425c" stroke-width="1.7"/></svg>
<div class="a" style="left:634px;top:293px;font-size:10.8px;line-height:14px;color:#222">执行</div>
<div class="a" style="left:528.5px;top:319px;width:130.5px;height:26px;border:1px solid #d4d4d4"></div>
<div class="a" style="left:532px;top:312px;font-size:10.8px;line-height:13px;color:#222;background:#f2f2f2;padding-right:1px">组</div>
<div class="a" style="left:533px;top:329px;width:11px;height:11px;background:#e9e9e9;border:1px solid #e0e0e0"></div>
<svg class="a" style="left:533px;top:328px" width="11" height="11" viewBox="0 0 11 11"><path d="M0.8 5.2L4 9.5L10.2 0.8" fill="none" stroke="#25425c" stroke-width="1.7"/></svg>
<div class="a" style="left:548px;top:328px;font-size:10.8px;line-height:14px;color:#222">读取</div>
<div class="a" style="left:576px;top:329px;width:11px;height:11px;background:#e9e9e9;border:1px solid #e0e0e0"></div>
<svg class="a" style="left:576px;top:328px" width="11" height="11" viewBox="0 0 11 11"><path d="M0.8 5.2L4 9.5L10.2 0.8" fill="none" stroke="#25425c" stroke-width="1.7"/></svg>
<div class="a" style="left:591px;top:328px;font-size:10.8px;line-height:14px;color:#222">写入</div>
<div class="a" style="left:619px;top:329px;width:11px;height:11px;background:#e9e9e9;border:1px solid #e0e0e0"></div>
<svg class="a" style="left:619px;top:328px" width="11" height="11" viewBox="0 0 11 11"><path d="M0.8 5.2L4 9.5L10.2 0.8" fill="none" stroke="#25425c" stroke-width="1.7"/></svg>
<div class="a" style="left:634px;top:328px;font-size:10.8px;line-height:14px;color:#222">执行</div>
<div class="a" style="left:528.5px;top:354px;width:130.5px;height:25px;border:1px solid #d4d4d4"></div>
<div class="a" style="left:532px;top:347px;font-size:10.8px;line-height:13px;color:#222;background:#f2f2f2;padding-right:1px">其他</div>
<div class="a" style="left:533px;top:364px;width:11px;height:11px;background:#e9e9e9;border:1px solid #e0e0e0"></div>
<svg class="a" style="left:533px;top:363px" width="11" height="11" viewBox="0 0 11 11"><path d="M0.8 5.2L4 9.5L10.2 0.8" fill="none" stroke="#25425c" stroke-width="1.7"/></svg>
<div class="a" style="left:548px;top:363px;font-size:10.8px;line-height:14px;color:#222">读取</div>
<div class="a" style="left:576px;top:364px;width:11px;height:11px;background:#e9e9e9;border:1px solid #e0e0e0"></div>
<svg class="a" style="left:576px;top:363px" width="11" height="11" viewBox="0 0 11 11"><path d="M0.8 5.2L4 9.5L10.2 0.8" fill="none" stroke="#25425c" stroke-width="1.7"/></svg>
<div class="a" style="left:591px;top:363px;font-size:10.8px;line-height:14px;color:#222">写入</div>
<div class="a" style="left:619px;top:364px;width:11px;height:11px;background:#e9e9e9;border:1px solid #e0e0e0"></div>
<svg class="a" style="left:619px;top:363px" width="11" height="11" viewBox="0 0 11 11"><path d="M0.8 5.2L4 9.5L10.2 0.8" fill="none" stroke="#25425c" stroke-width="1.7"/></svg>
<div class="a" style="left:634px;top:363px;font-size:10.8px;line-height:14px;color:#222">执行</div>

<div class="a" style="left:527px;top:387px;width:128px;height:102px;border:1px solid #d2d2d2"></div>
<div class="a" style="left:534px;top:397px;width:12px;height:12px;background:#fff;border:1px solid #6fa6d8"></div>
<svg class="a" style="left:535px;top:398px" width="10" height="10" viewBox="0 0 10 10"><path d="M1.5 5L4 7.5L8.5 2" fill="none" stroke="#3f7fc0" stroke-width="1.5"/></svg>
<div class="a" style="left:549px;top:396.5px;font-size:10.8px;line-height:15px;color:#222">递归设置子目录</div>
<div class="a" style="left:550px;top:421px;width:12px;height:12px;border-radius:50%;background:#fff;border:1px solid #6fa6d8"></div>
<div class="a" style="left:553px;top:424px;width:6px;height:6px;border-radius:50%;background:#3f88d8"></div>
<div class="a" style="left:565px;top:419.5px;font-size:10.8px;line-height:15px;color:#222">应用到文件和目录</div>
<div class="a" style="left:550px;top:445px;width:12px;height:12px;border-radius:50%;background:#fff;border:1px solid #c8c8c8"></div>
<div class="a" style="left:565px;top:443.5px;font-size:10.8px;line-height:15px;color:#222">只应用到文件</div>
<div class="a" style="left:550px;top:468px;width:12px;height:12px;border-radius:50%;background:#fff;border:1px solid #c8c8c8"></div>
<div class="a" style="left:565px;top:466.5px;font-size:10.8px;line-height:15px;color:#222">只应用到目录</div>

<div class="a" style="left:533px;top:491px;width:58px;height:19px;background:#fff;border:1px solid #d8d8d8;border-radius:2px;font-size:11px;line-height:17px;text-align:center;color:#222">确定</div>
<div class="a" style="left:597px;top:491px;width:58px;height:19px;background:#fff;border:1px solid #d8d8d8;border-radius:2px;font-size:11px;line-height:17px;text-align:center;color:#222">取消</div>

<div class="a" style="left:0;top:604px;width:1080px;height:2px;background:#b4b4b4"></div>
<div class="a" style="left:153px;top:604px;width:604px;height:2px;background:#2e2e2e"></div>

</body></html>
